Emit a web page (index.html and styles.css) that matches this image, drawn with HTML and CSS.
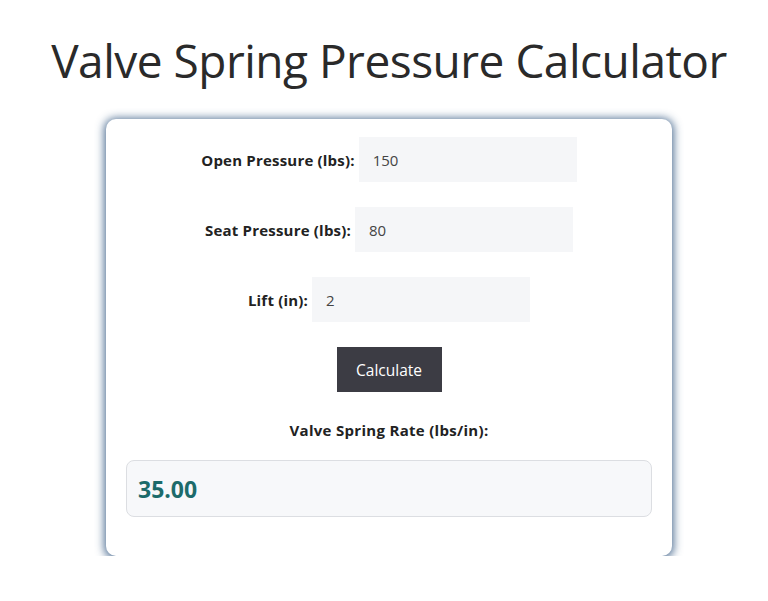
FILE: index.html
```html
<!doctype html>
<html lang="en">
  <head>
    <meta charset="UTF-8" />
    <meta name="viewport" content="width=device-width, initial-scale=1.0" />
    <title>Valve Spring Pressure Calculator</title>
    <link rel="stylesheet" href="styles.css">
  </head>
  <body>
    <h1 class="title">Valve Spring Pressure Calculator</h1>
    <div class="calc">
      <div class="field">
        <label for="open">Open Pressure (lbs):</label>
        <input id="open" type="text" value="150" />
      </div>
      <div class="field">
        <label for="seat">Seat Pressure (lbs):</label>
        <input id="seat" type="text" value="80" />
      </div>
      <div class="field">
        <label for="lift">Lift (in):</label>
        <input id="lift" type="text" value="2" />
      </div>
      <div class="actions">
        <button class="calculate">Calculate</button>
      </div>
      <div class="result-label">Valve Spring Rate (lbs/in):</div>
      <div class="result">35.00</div>
    </div>
  </body>
</html>
```

FILE: styles.css
```css
html,
body {
  margin: 0;
}
body {
  padding-left: 10px;
  background: #fff;
  color: #222;
  font-family: 'Open Sans', 'Noto Sans', sans-serif;
}
.title {
  margin: 0;
  padding-top: 28px;
  text-align: center;
  font-weight: 400;
  font-size: 46px;
  line-height: 64px;
  color: #2a2a2a;
  letter-spacing: -0.5px;
}
.calc {
  width: 526px;
  margin: 27px auto 0;
  padding: 18px 20px 39px;
  background: #fff;
  border-radius: 10px;
  box-shadow: 0 1px 9px 2px rgba(60, 95, 135, 0.85);
}
.field {
  display: flex;
  justify-content: center;
  align-items: center;
  gap: 4px;
  margin-bottom: 25px;
}
.field label {
  font-weight: 700;
  font-size: 15px;
  letter-spacing: 0.2px;
  color: #222;
}
.field input {
  width: 218px;
  height: 45px;
  box-sizing: border-box;
  border: none;
  background: #f5f6f8;
  padding: 0 14px;
  font-family: inherit;
  font-size: 15px;
  color: #444;
  outline: none;
}
.actions {
  display: flex;
  justify-content: center;
}
.calculate {
  width: 105px;
  height: 45px;
  border: none;
  background: #3c3c44;
  color: #fff;
  font-family: inherit;
  font-size: 15.5px;
  cursor: pointer;
}
.result-label {
  margin-top: 27px;
  text-align: center;
  font-weight: 700;
  font-size: 15px;
  letter-spacing: 0.3px;
  line-height: 22px;
}
.result {
  margin-top: 19px;
  height: 55px;
  display: flex;
  align-items: center;
  padding: 0 11px;
  border: 1px solid #dcdee2;
  border-radius: 8px;
  background: #f7f8fa;
  color: #1c6b6b;
  font-weight: 700;
  font-size: 23px;
}
```
